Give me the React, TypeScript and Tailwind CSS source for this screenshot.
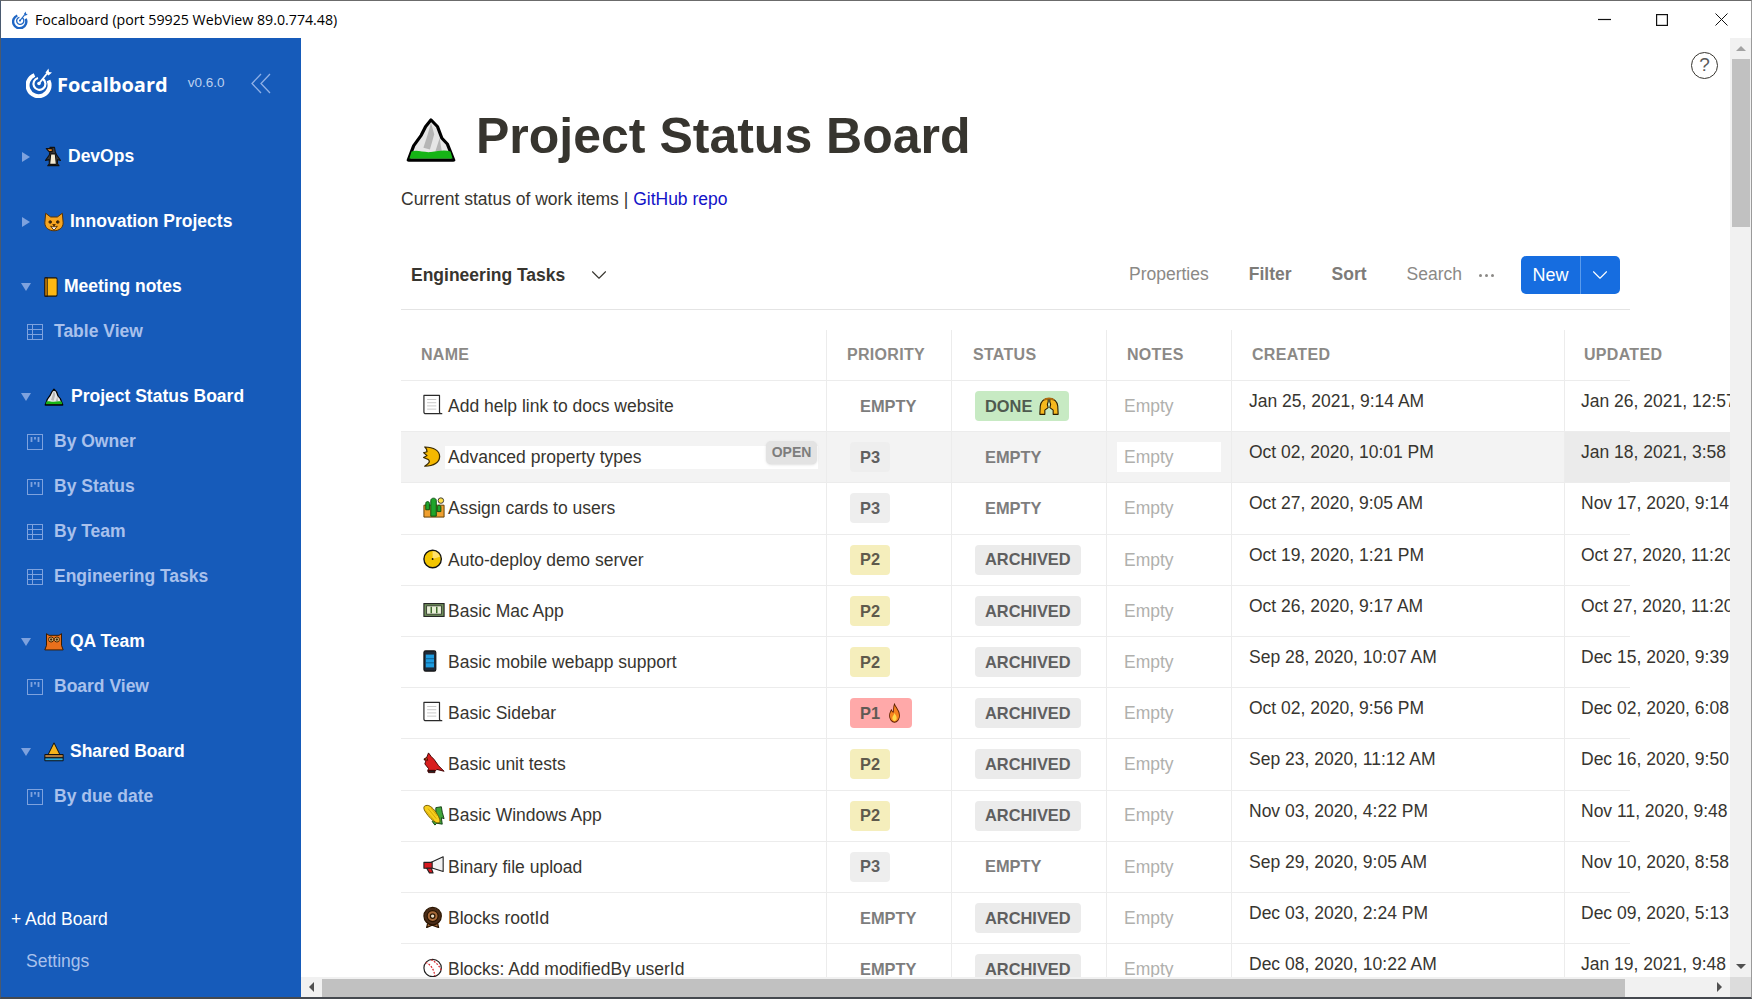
import { type ReactNode } from 'react';
import { ChevronDown } from 'lucide-react';

type EmojiName =
  | 'penguin' | 'cat' | 'notebook' | 'mountain' | 'owl' | 'boat' | 'scroll' | 'moon' | 'cactus'
  | 'disc' | 'money' | 'mobile' | 'fire' | 'bird' | 'corn' | 'horn' | 'wheel' | 'ball' | 'hands';

const EMOJI: Record<EmojiName, ReactNode> = {
  penguin: (
    <g stroke="#111" strokeWidth="1.4" strokeLinejoin="round">
      <path d="M8 1.500h6l1 5 2 4 5 6-4-1v5l2 2H5l2-2v-5l-5 1 5-6 1-4z" fill="#3a3a3a" />
      <path d="M9 9h6l1.500 12h-9z" fill="#f3ead2" />
      <path d="M3 3h8v3.500H7z" fill="#e8862a" />
    </g>
  ),
  cat: (
    <g stroke="#5a3200" strokeWidth="1.2" strokeLinejoin="round">
      <path d="M2 1.500l6 4.500h8l6-4.500 1 11.500c0 6-5 9.500-11 9.500S1 19 1 13z" fill="#f6a623" />
      <path d="M8 17c3 1 5 1 8 0l-4 5z" fill="#fff" />
      <circle cx="7.500" cy="12" r="1.600" fill="#222" />
      <circle cx="16.500" cy="12" r="1.600" fill="#222" />
      <path d="M10.500 15h3L12 17z" fill="#d22" />
    </g>
  ),
  notebook: (
    <g stroke="#111" strokeWidth="1.5" strokeLinejoin="round">
      <rect x="1.500" y="1" width="21" height="22" rx="2" fill="#fdb813" />
      <rect x="1.500" y="1" width="4" height="22" fill="#e08a00" />
    </g>
  ),
  mountain: (
    <g strokeLinejoin="round">
      <path d="M12 1.500L15 5l2 6 2.500 3 3 8.500h-21L4 15l3.500-5.500L9.500 5z" fill="#e6e6e6" stroke="#000" strokeWidth="1.500" />
      <path d="M12 3l1.500 6-2 8-3-1 2-7zM16 11l1 7-3 0z" fill="#b5b5b5" />
      <path d="M2 21.800l1-3.800c3-1 5 .6 9 .3 3.500-.5 6-1.300 9-.3l1 3.800z" fill="#16b416" />
      <path d="M1.500 22.500h21" stroke="#000" strokeWidth="1.500" />
    </g>
  ),
  owl: (
    <g stroke="#3a1c00" strokeWidth="1.2" strokeLinejoin="round">
      <path d="M3 2l3 2h12l3-2v14l2 5.500H1L3 16z" fill="#e8701c" />
      <circle cx="8.500" cy="9" r="3" fill="#ffd98a" />
      <circle cx="15.500" cy="9" r="3" fill="#ffd98a" />
      <circle cx="8.500" cy="9" r="1" fill="#111" />
      <circle cx="15.500" cy="9" r="1" fill="#111" />
    </g>
  ),
  boat: (
    <g stroke="#111" strokeWidth="1.2" strokeLinejoin="round">
      <path d="M12 1l7 14H5z" fill="#f5b31c" />
      <path d="M1 15h22v4H1z" fill="#b07a3c" />
      <path d="M1 19h22v3.500H1z" fill="#2aa7d8" />
    </g>
  ),
  scroll: (
    <g stroke="#2a2a2a" strokeLinejoin="round">
      <path d="M1 1.500h17v18c0 1.200 1 2 2.500 2H3c-1.200 0-2-.8-2-2z" fill="#fff" strokeWidth="1.300" />
      <path d="M4.500 6h10M4.500 9.500h10M4.500 13h10M4.500 16.500h10" stroke="#c4c4c4" strokeWidth="1" />
    </g>
  ),
  moon: (
    <g stroke="#3a2a00" strokeWidth="1.1" strokeLinejoin="round" transform="scale(1.25 1.05) translate(-4.500 0)">
      <path d="M6 2c8 0 13 4 13 10s-5 10-13 10c4-3 5-5 3-7l-4-2 3-2-3-3 3-1c0-2-1-4-2-5z" fill="#f5b800" />
    </g>
  ),
  cactus: (
    <g strokeLinejoin="round">
      <rect x="1" y="10" width="22" height="13" fill="#f0a030" stroke="#5a3a00" strokeWidth="1" />
      <path d="M8.500 22V5c0-3.500 6-3.500 6 0v17zM3 15V8c0-2.500 4-2.500 4 0v7zM15.500 17v-5c0-2.500 4-2.500 4 0v5z" fill="#1ea52a" stroke="#0a4a10" strokeWidth="1" />
      <circle cx="19.500" cy="5" r="3" fill="#ffe24a" stroke="#333" strokeWidth="1" />
    </g>
  ),
  disc: (
    <g stroke="#111" strokeWidth="1.500">
      <circle cx="10.500" cy="12" r="9.500" fill="#f3c500" />
      <path d="M10.500 3.500a8.500 8.500 0 0 1 8 6l-8 2.500z" fill="#ffe06a" stroke="none" />
      <circle cx="10.500" cy="12" r="1" fill="#111" stroke="none" />
    </g>
  ),
  money: (
    <g stroke="#222" strokeWidth="1.200">
      <rect x="1" y="5" width="22" height="14" fill="#6f8f5a" />
      <rect x="4" y="7.500" width="16" height="9" fill="#e8f0d6" strokeWidth=".8" />
      <path d="M9 8.500v7M15 8.500v7" stroke="#3c6a2a" strokeWidth="1.600" />
    </g>
  ),
  mobile: (
    <g stroke="#111" strokeWidth="1.200">
      <rect x="1" y="1" width="13" height="22" rx="1.800" fill="#1f2a38" />
      <rect x="3" y="5" width="9" height="14" fill="#1e9ce0" stroke="none" />
      <path d="M3 9.500h9M3 14h9" stroke="#0d5a8a" strokeWidth="1" />
    </g>
  ),
  fire: (
    <g stroke="#5a2000" strokeWidth="1.300" strokeLinejoin="round">
      <path d="M12 1c1 4 8 7 8 14 0 5-4 8-8 8s-8-3-8-8c0-3 2-5 3-7 1 2 2 3 3 3 1-3 0-6 2-10z" fill="#f5821f" />
      <path d="M12 12c1 2 3.500 3 3.500 6 0 2-1.500 3.500-3.500 3.500S8.500 20 8.500 18c0-2 2.500-3 3.500-6z" fill="#ffd84a" stroke="none" />
    </g>
  ),
  bird: (
    <g stroke="#3a0000" strokeWidth="1" strokeLinejoin="round">
      <path d="M6 1l3 4 3 3 5 7 6 6-8-2-2 2H5l1-3-4-5 1-3-2-2 3-2z" fill="#d81e1e" />
      <path d="M1 8l3-2 1 3z" fill="#f0a030" />
      <path d="M6 20h7v2.500H6z" fill="#222" />
    </g>
  ),
  corn: (
    <g stroke="#0f3a12" strokeWidth="1" strokeLinejoin="round">
      <path d="M14 4l6-1 1 6 2 7-3-1 1 7-6-1-2 2-3-4 4-4z" fill="#3fa53a" />
      <path d="M1.500 2.500c4-3 9 1 13 7s5 10 3 11c-3 1-8-3-12-8S0 4.500 1.500 2.500z" fill="#f7cf1d" stroke="#6a5200" />
      <path d="M5.500 5l9 11M3.500 8l9 10M8.500 4l7 9" stroke="#c99a00" strokeWidth=".8" />
    </g>
  ),
  horn: (
    <g stroke="#222" strokeWidth="1.200" strokeLinejoin="round">
      <path d="M9 8l13-6v16L9 14z" fill="#f2f2f2" />
      <path d="M1 8h9v6.500H1z" fill="#d9191f" />
      <path d="M4 14.500h5l2 5H7z" fill="#d9191f" />
    </g>
  ),
  wheel: (
    <g stroke="#2a1500" strokeWidth="1.300">
      <path d="M5 19l-1 4.500 6-2.500 7 2.500-1-4.500" fill="#a86a3a" />
      <circle cx="10.500" cy="11" r="9.500" fill="#4a2c18" />
      <circle cx="10.500" cy="11" r="6" fill="#a86a3a" />
      <circle cx="10.500" cy="11" r="2.500" fill="#e9dcc6" />
    </g>
  ),
  ball: (
    <g stroke="#222" strokeWidth="1.300" fill="none">
      <circle cx="10.500" cy="12" r="9.500" fill="#fff" />
      <path d="M3 6c5 2 9 7 10 15M9 3c4 2 9 6 11 12" stroke="#d8242a" strokeDasharray="2 1.500" />
    </g>
  ),
  hands: (
    <g stroke="#2a1c00" strokeWidth="1.300" strokeLinejoin="round">
      <path d="M11 3C6 3 2 7 1.500 12L1 22h6v-5l4-3-1-4 1-3z" fill="#f5b81d" />
      <path d="M13 3c5 0 9 4 9.500 9l.5 10h-6v-5l-4-3 1-4-1-3z" fill="#f5b81d" />
      <path d="M6 5c3-3 9-3 12 0" fill="none" stroke="#b06a10" strokeWidth="2.200" />
    </g>
  ),
};

function Emoji({ name, className }: { name: EmojiName; className: string }) {
  return <svg viewBox="0 0 24 24" preserveAspectRatio="none" className={className}>{EMOJI[name]}</svg>;
}

function Logo({ color, className }: { color: string; className: string }) {
  return (
    <svg viewBox="0 0 26 30" className={className} fill="none">
      <path d="M8.500 7.500A11 11 0 1 0 22.500 13" stroke={color} strokeWidth="4" />
      <path d="M17 11.500A6 6 0 1 1 12 10.500" stroke={color} strokeWidth="2.200" />
      <circle cx="13" cy="16" r="1.800" fill={color} />
      <path d="M13 16L21 6" stroke={color} strokeWidth="1.800" />
      <path d="M19.500 5l3-4 .5 3.500 3 .5-3.500 3z" fill={color} />
    </svg>
  );
}

function TableIcon() {
  return (
    <svg viewBox="0 0 16 16" className="w-[16px] h-[16px] mr-[11px] shrink-0" fill="none" stroke="#7ea2de" strokeWidth="1">
      <rect x=".5" y=".5" width="15" height="15" />
      <path d="M.5 5.500h15M.5 10.500h15M5.500 .5v15" />
    </svg>
  );
}

function BoardIcon() {
  return (
    <svg viewBox="0 0 16 16" className="w-[16px] h-[16px] mr-[11px] shrink-0" fill="none" stroke="#7ea2de" strokeWidth="1">
      <rect x=".5" y=".5" width="15" height="15" />
      <path d="M4.500 3v5M8 3v2.500M11.500 3v5" strokeWidth="1.800" />
    </svg>
  );
}

function Group({ open, emoji, iconCls, label, views }: {
  open: boolean; emoji: EmojiName; iconCls: string; label: string; views?: { kind: 'table' | 'board'; label: string }[];
}) {
  return (
    <div className="mb-[20px]">
      <div className="h-[45px] flex items-center pl-[20px]">
        <span className="w-[23px] shrink-0">
          {open
            ? <span className="block w-0 h-0 border-x-[5px] border-x-transparent border-t-[8px] border-t-[#7ea2de]" />
            : <span className="block ml-[1px] w-0 h-0 border-y-[5px] border-y-transparent border-l-[8px] border-l-[#7ea2de]" />}
        </span>
        <Emoji name={emoji} className={`shrink-0 ${iconCls}`} />
        <span className="text-[17.500px] font-bold text-white">{label}</span>
      </div>
      {views?.map(v => (
        <div key={v.label} className="h-[45px] flex items-center pl-[26px]">
          {v.kind === 'table' ? <TableIcon /> : <BoardIcon />}
          <span className="text-[17.500px] font-bold text-[#a9c1ec]">{v.label}</span>
        </div>
      ))}
    </div>
  );
}

function Sidebar() {
  return (
    <div className="w-[300px] shrink-0 bg-[#165bba] flex flex-col">
      <div className="h-[96px] flex items-start pt-[29px] pl-[25px]">
        <Logo color="#ffffff" className="w-[26px] h-[31px] shrink-0" />
        <span className="ml-[5px] mt-[3px] text-[20px] leading-[30px] font-bold font-['Open_Sans'] text-white">Focalboard</span>
        <span className="ml-[20px] mt-[6px] text-[13.500px] leading-[20px] text-[#bcd0ef]">v0.6.0</span>
        <svg viewBox="0 0 20 21" className="ml-[27px] mt-[6px] w-[20px] h-[21px]" fill="none" stroke="#8fb0e6" strokeWidth="1.300">
          <path d="M10 1L1 10.500 10 20M19 1l-9 9.500L19 20" />
        </svg>
      </div>
      <Group open={false} emoji="penguin" iconCls="w-[18px] h-[21px] mr-[6px]" label="DevOps" />
      <Group open={false} emoji="cat" iconCls="w-[20px] h-[20px] mr-[6px]" label="Innovation Projects" />
      <Group open emoji="notebook" iconCls="w-[14px] h-[20px] mr-[6px]" label="Meeting notes" views={[{ kind: 'table', label: 'Table View' }]} />
      <Group open emoji="mountain" iconCls="w-[20px] h-[18px] mr-[7px]" label="Project Status Board" views={[
        { kind: 'board', label: 'By Owner' },
        { kind: 'board', label: 'By Status' },
        { kind: 'table', label: 'By Team' },
        { kind: 'table', label: 'Engineering Tasks' },
      ]} />
      <Group open emoji="owl" iconCls="w-[20px] h-[20px] mr-[6px]" label="QA Team" views={[{ kind: 'board', label: 'Board View' }]} />
      <Group open emoji="boat" iconCls="w-[20px] h-[20px] mr-[6px]" label="Shared Board" views={[{ kind: 'board', label: 'By due date' }]} />
      <div className="flex-1" />
      <div className="pl-[10px] h-[42px] flex items-center text-[17.500px] text-white">+ Add Board</div>
      <div className="pl-[25px] h-[42px] mb-[15px] flex items-center text-[17.500px] text-[#a9c1ec]">Settings</div>
    </div>
  );
}

const ROWS: { icon: EmojiName; name: string; pri: string; status: string; created: string; updated: string }[] = [
  { icon: 'scroll', name: 'Add help link to docs website', pri: 'EMPTY', status: 'DONE', created: 'Jan 25, 2021, 9:14 AM', updated: 'Jan 26, 2021, 12:57 PM' },
  { icon: 'moon', name: 'Advanced property types', pri: 'P3', status: 'EMPTY', created: 'Oct 02, 2020, 10:01 PM', updated: 'Jan 18, 2021, 3:58 PM' },
  { icon: 'cactus', name: 'Assign cards to users', pri: 'P3', status: 'EMPTY', created: 'Oct 27, 2020, 9:05 AM', updated: 'Nov 17, 2020, 9:14 AM' },
  { icon: 'disc', name: 'Auto-deploy demo server', pri: 'P2', status: 'ARCHIVED', created: 'Oct 19, 2020, 1:21 PM', updated: 'Oct 27, 2020, 11:20 AM' },
  { icon: 'money', name: 'Basic Mac App', pri: 'P2', status: 'ARCHIVED', created: 'Oct 26, 2020, 9:17 AM', updated: 'Oct 27, 2020, 11:20 AM' },
  { icon: 'mobile', name: 'Basic mobile webapp support', pri: 'P2', status: 'ARCHIVED', created: 'Sep 28, 2020, 10:07 AM', updated: 'Dec 15, 2020, 9:39 AM' },
  { icon: 'scroll', name: 'Basic Sidebar', pri: 'P1', status: 'ARCHIVED', created: 'Oct 02, 2020, 9:56 PM', updated: 'Dec 02, 2020, 6:08 PM' },
  { icon: 'bird', name: 'Basic unit tests', pri: 'P2', status: 'ARCHIVED', created: 'Sep 23, 2020, 11:12 AM', updated: 'Dec 16, 2020, 9:50 AM' },
  { icon: 'corn', name: 'Basic Windows App', pri: 'P2', status: 'ARCHIVED', created: 'Nov 03, 2020, 4:22 PM', updated: 'Nov 11, 2020, 9:48 AM' },
  { icon: 'horn', name: 'Binary file upload', pri: 'P3', status: 'EMPTY', created: 'Sep 29, 2020, 9:05 AM', updated: 'Nov 10, 2020, 8:58 AM' },
  { icon: 'wheel', name: 'Blocks rootId', pri: 'EMPTY', status: 'ARCHIVED', created: 'Dec 03, 2020, 2:24 PM', updated: 'Dec 09, 2020, 5:13 PM' },
  { icon: 'ball', name: 'Blocks: Add modifiedBy userId', pri: 'EMPTY', status: 'ARCHIVED', created: 'Dec 08, 2020, 10:22 AM', updated: 'Jan 19, 2021, 9:48 AM' },
];

const BADGE: Record<string, string> = {
  P1: 'bg-[#ffa9a9] text-[#5f5a55]',
  P2: 'bg-[#f5eebc] text-[#5f5a4c]',
  P3: 'bg-[#eeeeee] text-[#5f5f5f]',
  DONE: 'bg-[#c7eac3] text-[#4f5a4f]',
  ARCHIVED: 'bg-[#ebebeb] text-[#5f5f5f]',
  EMPTY: 'text-[#7d7d7d]',
};

function Badge({ label }: { label: string }) {
  return (
    <span className={`h-[30px] px-[10px] rounded-[4px] inline-flex items-center text-[16.400px] font-bold whitespace-nowrap ${BADGE[label]}`}>
      {label}
      {label === 'P1' && <Emoji name="fire" className="w-[15px] h-[20px] ml-[7px]" />}
      {label === 'DONE' && <Emoji name="hands" className="w-[20px] h-[20px] ml-[7px]" />}
    </span>
  );
}

function Row({ row, hover }: { row: (typeof ROWS)[number]; hover: boolean }) {
  return (
    <div className={`w-[1229px] h-[51.200px] flex border-b border-[#ececec] text-[17.500px] text-[#37352f] ${hover ? 'bg-[#f3f3f3] border-[#e2e2e2]' : ''}`}>
      <div className="w-[426px] shrink-0 flex items-center pl-[22px] pr-[8px] border-r border-[#ececec] relative">
        <Emoji name={row.icon} className="w-[22px] h-[22px] shrink-0 mb-[2px]" />
        <span className={`h-[23px] flex items-center flex-1 pl-[3px] whitespace-nowrap ${hover ? 'bg-white' : ''}`}>{row.name}</span>
        {hover && (
          <span className="absolute left-[365px] top-[9px] w-[51px] h-[23px] rounded-[5px] bg-[#e3e3e3] shadow-sm flex items-center justify-center text-[14px] font-bold text-[#7d7d7d]">OPEN</span>
        )}
      </div>
      <div className="w-[125px] shrink-0 flex items-center pl-[23px] border-r border-[#ececec]"><Badge label={row.pri} /></div>
      <div className="w-[155px] shrink-0 flex items-center pl-[23px] border-r border-[#ececec]"><Badge label={row.status} /></div>
      <div className="w-[125px] shrink-0 flex items-center pl-[10px] pr-[10px] border-r border-[#ececec]">
        <span className={`h-[30px] flex-1 flex items-center pl-[7px] text-[#b0b0ad] ${hover ? 'bg-white' : ''}`}>Empty</span>
      </div>
      <div className="w-[333px] shrink-0 pl-[17px] pt-[8px] leading-[24px] border-r border-[#ececec] whitespace-nowrap">{row.created}</div>
      <div className={`flex-1 pl-[16px] pt-[8px] leading-[24px] whitespace-nowrap ${hover ? 'bg-[#ebebeb]' : ''}`}>{row.updated}</div>
    </div>
  );
}

function HeaderCell({ label, className }: { label: string; className: string }) {
  return (
    <div className={`shrink-0 flex items-center border-r border-[#ececec] text-[16px] font-bold tracking-[0.3px] text-[#8b8986] ${className}`}>{label}</div>
  );
}

function Board() {
  return (
    <div className="flex-1 min-w-0 overflow-hidden bg-white relative pl-[100px]">
      <div className="absolute right-[12px] top-[14px] w-[27px] h-[27px] rounded-full border border-[#37352f] flex items-center justify-center text-[19px] text-[#5a5a5a]">?</div>
      <div className="pt-[71px] h-[125px] flex items-center gap-[19px] text-[50px] leading-[54px] font-bold text-[#37352f] whitespace-nowrap">
        <Emoji name="mountain" className="w-[52px] h-[46px] ml-[4px] mt-[7px]" />
        Project Status Board
      </div>
      <div className="mt-[24px] h-[24px] leading-[24px] text-[17.500px] text-[#37352f]">
        Current status of work items | <span className="text-[#1212c8]">GitHub repo</span>
      </div>
      <div className="mt-[45px] w-[1229px] pb-[15px] border-b border-[#e4e4e4] flex items-center pl-[10px] h-[54px]">
        <span className="text-[17.500px] font-bold text-[#37352f]">Engineering Tasks</span>
        <ChevronDown className="ml-[21px] w-[26px] h-[26px] text-[#37352f]" strokeWidth={1} />
        <div className="flex-1" />
        <div className="flex items-center text-[17.500px] text-[#8b8986] mr-[10px]">
          <span className="mb-[2px]">Properties</span>
          <span className="mb-[2px] ml-[40px] font-bold text-[#7d7b78]">Filter</span>
          <span className="mb-[2px] ml-[40px] font-bold text-[#7d7b78]">Sort</span>
          <span className="mb-[2px] ml-[40px]">Search</span>
          <span className="ml-[17px] flex gap-[3px]">
            <span className="w-[3px] h-[3px] rounded-full bg-[#8b8986]" />
            <span className="w-[3px] h-[3px] rounded-full bg-[#8b8986]" />
            <span className="w-[3px] h-[3px] rounded-full bg-[#8b8986]" />
          </span>
          <span className="ml-[27px] h-[38px] w-[99px] rounded-[5px] bg-[#166de0] text-white text-[18px] flex items-center">
            <span className="w-[60px] h-full flex items-center justify-center border-r border-[#5a9bec]">New</span>
            <ChevronDown className="ml-[6px] w-[26px] h-[26px]" strokeWidth={1} />
          </span>
        </div>
      </div>
      <div className="mt-[20px] w-[1229px] h-[51px] flex border-b border-[#ececec]">
        <HeaderCell label="NAME" className="w-[426px] pl-[20px]" />
        <HeaderCell label="PRIORITY" className="w-[125px] pl-[20px]" />
        <HeaderCell label="STATUS" className="w-[155px] pl-[21px]" />
        <HeaderCell label="NOTES" className="w-[125px] pl-[20px]" />
        <HeaderCell label="CREATED" className="w-[333px] pl-[20px]" />
        <div className="flex items-center pl-[19px] text-[16px] font-bold tracking-[0.3px] text-[#8b8986] whitespace-nowrap">UPDATED</div>
      </div>
      {ROWS.map((row, i) => <Row key={row.name} row={row} hover={i === 1} />)}
    </div>
  );
}

export default function App() {
  return (
    <div className="w-[1752px] h-[999px] flex flex-col overflow-hidden bg-white border-t border-[#6b6b6b] border-l border-l-[#4a5a70] border-r border-r-[#9a9a9a] border-b-2 border-b-[#45494f] font-['Liberation_Sans',Arial,sans-serif]">
      <div className="h-[37px] shrink-0 flex items-center pl-[11px] text-black">
        <Logo color="#1f66c4" className="w-[16px] h-[18px]" />
        <span className="ml-[7px] text-[14.200px] font-['Open_Sans'] whitespace-nowrap">Focalboard (port 59925 WebView 89.0.774.48)</span>
        <div className="flex-1" />
        <svg viewBox="0 0 13 13" className="w-[13px] h-[13px] mr-[45px]" fill="none" stroke="#111" strokeWidth="1.200"><path d="M0 6.500h13" /></svg>
        <svg viewBox="0 0 12 12" className="w-[12px] h-[12px] mr-[47px]" fill="none" stroke="#111" strokeWidth="1.200"><rect x=".6" y=".6" width="10.800" height="10.800" /></svg>
        <svg viewBox="0 0 13 13" className="w-[13px] h-[13px] mr-[23px]" fill="none" stroke="#111" strokeWidth="1"><path d="M.5 .5l12 12M12.500 .5l-12 12" /></svg>
      </div>
      <div className="flex-1 min-h-0 flex">
        <Sidebar />
        <div className="flex-1 min-w-0 flex flex-col">
          <div className="flex-1 min-h-0 flex">
            <Board />
            <div className="w-[21px] shrink-0 bg-[#f1f1f1] flex flex-col items-center">
              <div className="h-[21px] shrink-0 flex items-center justify-center">
                <span className="w-0 h-0 border-x-[5px] border-x-transparent border-b-[5px] border-b-[#a3a3a3]" />
              </div>
              <div className="w-[18px] h-[168px] bg-[#c1c1c1]" />
              <div className="flex-1" />
              <div className="h-[21px] shrink-0 flex items-center justify-center">
                <span className="w-0 h-0 border-x-[5px] border-x-transparent border-t-[5px] border-t-[#505050]" />
              </div>
            </div>
          </div>
          <div className="h-[20px] shrink-0 flex bg-[#f1f1f1]">
            <div className="w-[21px] flex items-center justify-center">
              <span className="w-0 h-0 border-y-[5px] border-y-transparent border-r-[5px] border-r-[#505050]" />
            </div>
            <div className="w-[1303px] h-[18px] mt-[2px] bg-[#c1c1c1]" />
            <div className="flex-1" />
            <div className="w-[21px] flex items-center justify-center">
              <span className="w-0 h-0 border-y-[5px] border-y-transparent border-l-[5px] border-l-[#505050]" />
            </div>
            <div className="w-[21px] bg-[#dcdcdc]" />
          </div>
        </div>
      </div>
    </div>
  );
}
